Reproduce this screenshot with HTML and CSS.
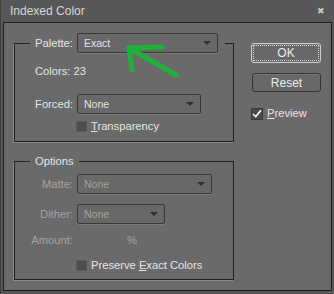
FILE: index.html
```html
<!DOCTYPE html>
<html lang="en">
<head>
  <meta charset="UTF-8" />
  <title>Indexed Color</title>
  <link rel="stylesheet" href="styles.css">
</head>
<body>
  <div class="window">
    <div class="titlebar">
      <span>Indexed Color</span>
      <span class="close">&#x2716;</span>
    </div>

    <div class="panel">
      <div class="left">
        <fieldset class="group palette">
          <legend>
            <span class="lbl">Palette:</span>
            <span class="select w-exact">Exact</span>
          </legend>
          <div class="colors">Colors: 23</div>
          <div class="row forced">
            <span class="lbl">Forced:</span>
            <span class="select w-forced">None</span>
          </div>
          <div class="row check-row">
            <span></span>
            <label class="check"><span class="box"></span><span><u>T</u>ransparency</span></label>
          </div>
        </fieldset>

        <fieldset class="group options">
          <legend><span class="lbl">Options</span></legend>
          <div class="row matte">
            <span class="lbl off">Matte:</span>
            <span class="select off w-matte">None</span>
          </div>
          <div class="row dither">
            <span class="lbl off">Dither:</span>
            <span class="select off w-dither">None</span>
          </div>
          <div class="row amount">
            <span class="lbl off">Amount:</span>
            <span class="off pct">%</span>
          </div>
          <div class="row check-row preserve">
            <span></span>
            <label class="check"><span class="box"></span><span>Preserve <u>E</u>xact Colors</span></label>
          </div>
        </fieldset>
      </div>

      <div class="right">
        <button class="btn ok">OK</button>
        <button class="btn reset">Reset</button>
        <label class="check preview">
          <span class="box on">
            <svg width="10" height="9" viewBox="0 0 10 9"><path d="M1 5 L3.8 7.6 L9 1.2" fill="none" stroke="#fff" stroke-width="1.6"/></svg>
          </span>
          <span><u>P</u>review</span>
        </label>
      </div>
    </div>

    <!-- green arrow drawn over the dialog -->
    <svg class="arrow" width="334" height="294" viewBox="0 0 334 294">
      <g fill="none" stroke="#1fb23a" stroke-width="5" stroke-linecap="round" stroke-linejoin="round">
        <path d="M161 47 L128 48 L131 70"/>
        <path d="M128 48 L175 75"/>
      </g>
    </svg>
  </div>
</body>
</html>
```

FILE: styles.css
```css
* {
  box-sizing: border-box;
  margin: 0;
  padding: 0;
}

body {
  font-family: "Liberation Sans", Arial, sans-serif;
  font-size: 11.2px;
  background: #4a4a4a;
  width: 334px;
  height: 294px;
  overflow: hidden;
}

.window {
  position: relative;
  width: 334px;
  height: 294px;
  background: #575757;
  border-left: 1px solid #3e3e3e;
  display: flex;
  flex-direction: column;
}

.titlebar {
  height: 22px;
  display: flex;
  align-items: center;
  justify-content: space-between;
  padding: 0 9px 0 9px;
  color: #d6d6d6;
  font-size: 12px;
}

.close {
  font-size: 9px;
  color: #c8c8c8;
}

.panel {
  flex: 1;
  margin: 0 2px 3px 2px;
  border: 1px solid #1e1e1e;
  background: #6a6a6a;
  display: flex;
  padding: 10px 0 0 10px;
}

.left {
  width: 220px;
}

.group {
  border: 1px solid #222;
  box-shadow: -1px 1px 0 #8a8a8a;
  padding: 0;
  margin: 0;
  min-inline-size: 0;
}

.group legend {
  margin-left: 15px;
  padding: 0 7px 0 5px;
  display: flex;
  align-items: center;
  gap: 4px;
}

.lbl {
  color: #e6e6e6;
  line-height: 15px;
}

.off {
  color: #a2a2a2;
}

.select {
  position: relative;
  display: block;
  height: 20px;
  line-height: 18px;
  padding-left: 6px;
  font-size: 10.5px;
  color: #e2e2e2;
  border: 1px solid #383838;
  border-radius: 2px;
  box-shadow: 0 1px 0 #7a7a7a;
  background: #686868;
}

.select::after {
  content: "";
  position: absolute;
  right: 6px;
  top: 7px;
  border-left: 4px solid transparent;
  border-right: 4px solid transparent;
  border-top: 4px solid #2e2e2e;
}

.select.off {
  color: #a2a2a2;
}

.w-exact { width: 141px; }
.w-forced { width: 124px; }
.w-matte { width: 135px; }
.w-dither { width: 88px; }

.colors {
  color: #e6e6e6;
  padding-left: 20px;
  line-height: 15px;
  margin-top: 11px;
}

.row {
  display: grid;
  grid-template-columns: 58px auto;
  column-gap: 4px;
  align-items: center;
}

.row .lbl {
  text-align: right;
}

.forced { margin-top: 15px; }

.check-row { margin-top: 5px; }

.palette .check-row { margin-bottom: 7px; }

.check {
  display: flex;
  align-items: center;
  gap: 4px;
  color: #e6e6e6;
  line-height: 15px;
}

.check-row .check {
  margin-left: -1px;
}

.box {
  width: 11px;
  height: 11px;
  background: #4c4c4c;
  border: 1px solid #5a5a5a;
  display: flex;
  align-items: center;
  justify-content: center;
}

.options {
  margin-top: 12px;
}

.options legend {
  padding: 0 5px;
}

.matte { margin-top: 5px; }
.dither { margin-top: 10px; }
.amount { margin-top: 9px; line-height: 15px; }
.pct { padding-left: 50px; }
.preserve { margin-top: 10px; margin-bottom: 6px; }

.right {
  margin-left: 17px;
  width: 70px;
  display: flex;
  flex-direction: column;
  padding-top: 10px;
}

.btn {
  font-family: "Liberation Sans", Arial, sans-serif;
  font-size: 12px;
  color: #ececec;
  background: #686868;
  border: 1px solid #343434;
  border-radius: 3px;
  box-shadow: inset 0 1px 0 #777;
  height: 19px;
}

.ok {
  height: 20px;
  border-color: #cfcfcf;
  outline: 1px dotted #d8d8d8;
  outline-offset: -3px;
}

.reset {
  margin-top: 10px;
  margin-left: 1px;
}

.preview {
  margin-top: 14px;
  gap: 4px;
}

.box.on {
  width: 12px;
  height: 12px;
  background: #4a4a4a;
  border-color: #3a3a3a;
}

.arrow {
  position: absolute;
  left: 0;
  top: 0;
  pointer-events: none;
}
```
